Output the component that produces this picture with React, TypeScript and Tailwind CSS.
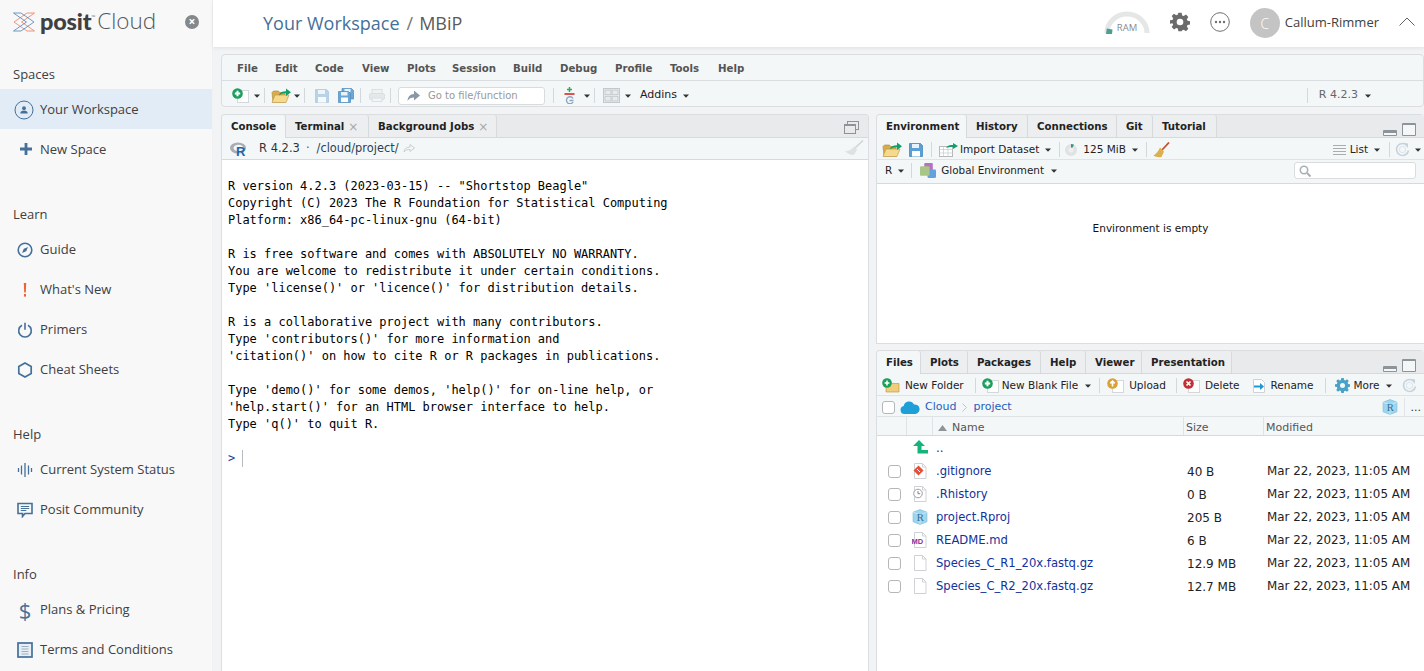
import React from "react";

const ui = "font-['DejaVu_Sans',sans-serif]";
const open = "font-['Open_Sans',sans-serif]";

function Caret({ className = "" }: { className?: string }) {
  return (
    <svg width="6" height="4" viewBox="0 0 6 4" className={"shrink-0 " + className}>
      <path d="M0 0.5h6L3 3.8z" fill="#333" />
    </svg>
  );
}
function Sep({ className = "" }: { className?: string }) {
  return <div className={"w-px h-[15px] bg-[#d4d8db] shrink-0 " + className} />;
}
function Folder({ w = 20 }: { w?: number }) {
  return (
    <svg width={w} height={w * 0.75} viewBox="0 0 20 15" className="shrink-0">
      <path d="M1 4.500L2.500 3h5l1 1.500H14V14H2z" fill="#d9ac4c" stroke="#a98432" strokeWidth=".6" />
      <path d="M4 7h14l-3 7.500H1z" fill="#f6d98a" stroke="#b8923e" strokeWidth=".6" />
      <path d="M8 7.500c.5-3 3-4.300 7-4.300V.5L20 4.300l-5 3.800V5.300c-3 0-5 .6-7 2.200z" fill="#12a06a" />
    </svg>
  );
}
function Floppy({ className = "" }: { className?: string }) {
  return (
    <svg width="14" height="14" viewBox="0 0 14 14" className={"shrink-0 " + className}>
      <path d="M.5.5h11l2 2v11H.5z" fill="#5a9fd6" stroke="#3f7fb5" strokeWidth=".7" />
      <rect x="3" y="1" width="7" height="4" fill="#e9f2fa" />
      <rect x="3" y="8" width="8" height="5.500" fill="#fff" />
    </svg>
  );
}
function SaveAll({ className = "" }: { className?: string }) {
  return (
    <svg width="16" height="15" viewBox="0 0 16 15" className={"shrink-0 " + className}>
      <path d="M4 .5h9.500l2 2V11H4z" fill="#5a9fd6" stroke="#3f7fb5" strokeWidth=".7" />
      <rect x="6.500" y="1" width="6" height="3" fill="#e9f2fa" />
      <path d="M.5 3.500h10l2 2v9H.5z" fill="#5a9fd6" stroke="#3f7fb5" strokeWidth=".7" />
      <rect x="3" y="4" width="6.500" height="3.500" fill="#e9f2fa" />
      <rect x="3" y="9.500" width="7" height="4.500" fill="#fff" />
    </svg>
  );
}
function PageBadge({ color, glyph }: { color: string; glyph: "plus" | "up" | "x" }) {
  return (
    <svg width="17" height="15" viewBox="0 0 17 15" className="shrink-0">
      <rect x="5.500" y="2.500" width="11" height="12" fill="#fff" stroke="#d5d8da" />
      <circle cx="5.500" cy="5.500" r="5.300" fill={color} />
      {glyph === "plus" && <path d="M5.500 2.800v5.400M2.800 5.500h5.400" stroke="#fff" strokeWidth="2" />}
      {glyph === "x" && <path d="M3.500 3.500l4 4M7.500 3.500l-4 4" stroke="#fff" strokeWidth="1.700" />}
      {glyph === "up" && <path d="M5.500 8.400V3.200M3.300 5.400l2.200-2.200 2.200 2.200" stroke="#fff" strokeWidth="1.600" fill="none" />}
    </svg>
  );
}
function Refresh() {
  return (
    <svg width="15" height="15" viewBox="0 0 15 15" className="shrink-0">
      <path d="M12.500 4A6 6 0 1 0 13.500 8.500" fill="none" stroke="#c5d3dc" strokeWidth="1.600" />
      <path d="M8.500 .8L13 1.500V6z" fill="#c5d3dc" />
      <circle cx="7.500" cy="7.500" r="3.200" fill="none" stroke="#dbe3e8" strokeWidth="1" />
    </svg>
  );
}
function RLogo() {
  return (
    <svg width="18" height="17" viewBox="0 0 18 17" className="shrink-0 mt-[3px]">
      <ellipse cx="8" cy="6" rx="8" ry="5.500" fill="#a9adb2" />
      <ellipse cx="8.500" cy="6" rx="5" ry="3.200" fill="#f4f7f8" />
      <text x="6" y="13.500" fontSize="13" fontWeight="700" fill="#1f64b0" fontFamily="Liberation Sans, sans-serif">R</text>
    </svg>
  );
}
function Cube({ size = 16 }: { size?: number }) {
  return (
    <svg width={size} height={size} viewBox="0 0 15 15" className="shrink-0">
      <path d="M7.500 .5L14 3v9l-6.500 2.500L1 12V3z" fill="#9fd6ee" stroke="#74bcdc" strokeWidth=".6" />
      <path d="M1 3l6.500 2.500L14 3M7.500 5.500v9" stroke="#d5eef8" strokeWidth=".7" fill="none" />
      <text x="4.500" y="11.500" fontSize="10" fill="#2f6f9a" fontFamily="Liberation Serif, serif">R</text>
    </svg>
  );
}
function FilePage({ children }: { children?: React.ReactNode }) {
  return (
    <svg width="16" height="16" viewBox="0 0 16 16" className="shrink-0">
      <path d="M2.500.5h8l3.500 3.500v11.500H2.500z" fill="#fff" stroke="#cfd2d4" />
      <path d="M10.500.5V4H14" fill="none" stroke="#cfd2d4" />
      {children}
    </svg>
  );
}
function Check() {
  return <div className="w-[13px] h-[13px] rounded-[3px] border border-[#b4b7b9] bg-white shrink-0" />;
}

function Tab({ w, label, active, close }: { w: string; label: string; active?: boolean; close?: boolean }) {
  return (
    <div
      className={
        "flex items-center pl-[9px] pt-[1px] rounded-t-[3px] border-r border-[#d6dadc] text-[10.2px] font-bold text-[#222] whitespace-nowrap shrink-0 " +
        w +
        (active ? " bg-[#f4f7f8] text-[#111] h-[23px] -mb-px z-10" : " bg-[#eceef0] h-[22px]")
      }
    >
      {label}
      {close && <span className="ml-[4px] text-[#a5a8aa] font-normal text-[12px] leading-none">×</span>}
    </div>
  );
}
function MinMax() {
  return (
    <div className="ml-auto mr-[8px] flex items-end gap-[5px] shrink-0">
      <div className="w-[14px] h-[6px] border border-[#8d9499] border-t-[3px] rounded-[1px] mb-[1px] bg-[#f4f7f8]" />
      <div className="w-[14px] h-[13px] border border-[#8d9499] border-t-2 rounded-[1px] mb-[1px] bg-[#f4f7f8]" />
    </div>
  );
}

type NI = { label: string; icon: React.ReactNode; active?: boolean };
const blue = "#447099";
const S = ({ children }: { children: React.ReactNode }) => (
  <svg width="16" height="16" viewBox="0 0 16 16" className="shrink-0">
    {children}
  </svg>
);
const sections: { title: string; items: NI[] }[] = [
  {
    title: "Spaces",
    items: [
      {
        label: "Your Workspace",
        active: true,
        icon: (
          <svg width="20" height="20" viewBox="0 0 20 20" className="shrink-0">
            <circle cx="10" cy="10" r="9" fill="none" stroke={blue} strokeWidth="1" />
            <circle cx="10" cy="8.200" r="1.900" fill={blue} />
            <path d="M6.300 13.500c0-2.200 1.600-3 3.700-3s3.700.8 3.700 3z" fill={blue} />
          </svg>
        ),
      },
      {
        label: "New Space",
        icon: (
          <svg width="14" height="14" viewBox="0 0 14 14" className="shrink-0 -mt-[2px] ml-[2px]">
            <path d="M7 1v12M1 7h12" stroke={blue} strokeWidth="2.800" />
          </svg>
        ),
      },
    ],
  },
  {
    title: "Learn",
    items: [
      {
        label: "Guide",
        icon: (
          <S>
            <circle cx="8" cy="8" r="6.800" fill="none" stroke={blue} strokeWidth="1.600" />
            <path d="M11 5L9.200 9.200 5 11l1.800-4.200z" fill={blue} />
          </S>
        ),
      },
      {
        label: "What's New",
        icon: (
          <S>
            <path d="M6.800 1h2.400l-.4 9.500H7.200z" fill="#ee6331" />
            <rect x="7" y="12" width="2" height="2.600" fill="#ee6331" />
          </S>
        ),
      },
      {
        label: "Primers",
        icon: (
          <S>
            <path d="M5 3.200a6.300 6.300 0 1 0 6 0" fill="none" stroke={blue} strokeWidth="1.600" />
            <path d="M8 .8v7" stroke={blue} strokeWidth="1.600" />
          </S>
        ),
      },
      {
        label: "Cheat Sheets",
        icon: (
          <S>
            <path d="M8 1l6.200 3.500v7L8 15l-6.200-3.500v-7z" fill="none" stroke={blue} strokeWidth="1.700" />
          </S>
        ),
      },
    ],
  },
  {
    title: "Help",
    items: [
      {
        label: "Current System Status",
        icon: (
          <S>
            <path d="M1.500 6v4M4.500 3.500v9M8 1v14M11.500 3.500v9M14.500 6v4" stroke={blue} strokeWidth="1.300" />
          </S>
        ),
      },
      {
        label: "Posit Community",
        icon: (
          <S>
            <path d="M1 1.500h14v10H8L5.500 14.500V11.500H1z" fill="none" stroke={blue} strokeWidth="1.600" />
            <path d="M3.800 4.500h8.400M3.800 6.500h8.400M3.800 8.500h5.500" stroke={blue} strokeWidth="1" />
          </S>
        ),
      },
    ],
  },
  {
    title: "Info",
    items: [
      {
        label: "Plans & Pricing",
        icon: <span className={"w-4 text-center text-[22px] leading-none text-[#447099] " + open}>$</span>,
      },
      {
        label: "Terms and Conditions",
        icon: (
          <S>
            <rect x="1" y="1" width="14" height="14" fill="#e8eef3" stroke={blue} strokeWidth="1.700" />
            <path d="M4.500 4.500h7M4.500 7h7M4.500 9.500h7M4.500 12h7" stroke="#8fa9bf" strokeWidth=".9" />
          </S>
        ),
      },
    ],
  },
];

function Sidebar() {
  return (
    <aside className={"w-[213px] shrink-0 h-full bg-[#f8f8f9] border-r border-[#f0f1f2] overflow-hidden " + open}>
      <div className="h-[59px] pl-[13px] pr-[13px] flex items-start pt-[8px]">
        <svg width="22" height="20" viewBox="0 0 22 20" className="mt-[4px] shrink-0">
          <path d="M21.500 1H14L1 10l13 9h7.500L8.500 10z" fill="none" stroke="#ee8a72" strokeWidth=".9" />
          <path d="M.5 1H8l13 9-13 9H.5l13-9z" fill="none" stroke="#5c8fbd" strokeWidth=".9" />
        </svg>
        <span className="ml-[5px] font-['Lato',sans-serif] font-black text-[23.500px] leading-[26px] text-[#404041] tracking-[-0.2px]">posit</span>
        <span className="text-[5px] leading-[18px] text-[#777]">™</span>
        <span className="ml-[2px] font-light text-[22.500px] leading-[26px] text-[#55585a]">Cloud</span>
        <div className="ml-auto mt-[7px] w-[14px] h-[14px] rounded-full bg-[#85888a] flex items-center justify-center text-white text-[12px] leading-none font-bold">×</div>
      </div>
      {sections.map((s) => (
        <div key={s.title} className="mb-[30px]">
          <div className="h-[30px] pt-[2px] flex items-center pl-[13px] text-[13px] text-[#404040]">{s.title}</div>
          {s.items.map((it) => (
            <div
              key={it.label}
              className={"h-[40px] pt-[2px] flex items-center text-[13px] text-[#404040] " + (it.active ? "bg-[#e1ecf6] pl-[14px]" : "pl-[17px]")}
            >
              {it.icon}
              <span className={it.active ? "ml-[6px]" : "ml-[7px]"}>{it.label}</span>
            </div>
          ))}
        </div>
      ))}
    </aside>
  );
}

function Header() {
  return (
    <header className={"h-[47px] shrink-0 bg-white pb-[1px] shadow-[0_1px_4px_rgba(0,0,0,0.08)] flex items-center pl-[50px] pr-[9px] z-10 relative " + open}>
      <span className="text-[18px] text-[#447099]">Your Workspace</span>
      <span className="text-[18px] text-[#767676] ml-[7px]">/</span>
      <span className="text-[18px] text-[#5a5a5a] ml-[6px]">MBiP</span>
      <div className="ml-auto flex items-center">
        <svg width="46" height="24" viewBox="0 0 46 24" className="shrink-0">
          <path d="M3 22A20 19 0 0 1 43 22" fill="none" stroke="#e5e7e6" strokeWidth="5" />
          <path d="M2 23L2.800 17.500 8.500 18.500 8 23z" fill="#4f9d92" />
          <text x="23" y="20" textAnchor="middle" fontSize="9.500" fill="#8a8a8a" fontFamily="Open Sans, sans-serif">RAM</text>
        </svg>
        <svg width="20" height="20" viewBox="0 0 24 24" className="ml-[20px] shrink-0 -mt-[3px]">
          <path
            fill="#6b6b6b"
            fillRule="evenodd"
            d="M10 1h4l.6 3.100 1.900.8 2.700-1.800 2.800 2.800-1.800 2.700.8 1.900 3 .5v4l-3 .6-.8 1.900 1.800 2.700-2.800 2.800-2.700-1.800-1.900.8L14 23h-4l-.6-3.100-1.900-.8-2.700 1.800-2.800-2.800 1.800-2.700-.8-1.900L0 14v-4l3-.5.8-1.900L2 4.900l2.800-2.800 2.700 1.800 1.900-.8zM12 8a4 4 0 1 0 0 8 4 4 0 0 0 0-8z"
          />
        </svg>
        <svg width="20" height="20" viewBox="0 0 20 20" className="ml-[20px] shrink-0 -mt-[3px]">
          <circle cx="10" cy="10" r="9.300" fill="none" stroke="#6f6f6f" strokeWidth="1" />
          <circle cx="6" cy="10" r="1.200" fill="#6f6f6f" />
          <circle cx="10" cy="10" r="1.200" fill="#6f6f6f" />
          <circle cx="14" cy="10" r="1.200" fill="#6f6f6f" />
        </svg>
        <div className="ml-[20px] w-[30px] h-[30px] rounded-full bg-[#c4c4c4] flex items-center justify-center text-white text-[14px] font-light">C</div>
        <span className="ml-[5px] text-[13px] text-[#404040]">Callum-Rimmer</span>
        <svg width="16" height="9" viewBox="0 0 16 9" className="ml-[20px] shrink-0 -mt-[4px]">
          <path d="M.5 8.500L8 1l7.500 7.500" fill="none" stroke="#606060" strokeWidth="1" />
        </svg>
      </div>
    </header>
  );
}

const menu: [string, string][] = [
  ["File", "w-[38px]"],
  ["Edit", "w-[40px]"],
  ["Code", "w-[47px]"],
  ["View", "w-[45px]"],
  ["Plots", "w-[45px]"],
  ["Session", "w-[61px]"],
  ["Build", "w-[47px]"],
  ["Debug", "w-[55px]"],
  ["Profile", "w-[55px]"],
  ["Tools", "w-[48px]"],
  ["Help", "w-[40px]"],
];

function TopBars() {
  return (
    <div className={"rounded-[4px] border border-[#dadee0] bg-[#f4f7f8] shrink-0 " + ui}>
      <div className="h-[26px] pt-[2px] flex items-center pl-[15px] border-b border-[#dadee0] text-[10.2px] font-bold text-[#545454]">
        {menu.map(([m, w]) => (
          <div key={m} className={w}>{m}</div>
        ))}
      </div>
      <div className="h-[25px] pt-[4px] flex items-center pl-[10px] text-[11px]">
        <PageBadge color="#1aa05b" glyph="plus" />
        <Caret className="ml-[5px]" />
        <Sep className="ml-[4px]" />
        <div className="ml-[6px]"><Folder /></div>
        <Caret className="ml-[3px]" />
        <Sep className="ml-[4px]" />
        <div className="ml-[10px] opacity-40"><Floppy /></div>
        <SaveAll className="ml-[9px] opacity-90" />
        <Sep className="ml-[6px]" />
        <svg width="16" height="13" viewBox="0 0 16 13" className="ml-[8px] shrink-0 opacity-70">
          <rect x="3" y=".5" width="10" height="5" fill="#eef0f1" stroke="#d2d5d7" />
          <rect x=".5" y="4.500" width="15" height="6" rx="1.500" fill="#e0e3e5" stroke="#d2d5d7" />
          <rect x="3" y="9" width="10" height="3.500" fill="#f3f4f5" stroke="#d2d5d7" />
        </svg>
        <Sep className="ml-[5px]" />
        <div className="ml-[7px] w-[147px] h-[18px] rounded-[3px] border border-[#d9dcde] bg-white flex items-center pl-[8px] text-[10px] text-[#999]">
          <svg width="13" height="12" viewBox="0 0 13 12" className="shrink-0">
            <path d="M7 .5l6 5-6 5V7.500C4 7.500 2 8.500.5 11c.3-4 2.500-6.800 6.500-7z" fill="#8a97a6" />
          </svg>
          <span className="ml-[8px]">Go to file/function</span>
        </div>
        <Sep className="ml-[8px]" />
        <svg width="13" height="17" viewBox="0 0 13 17" className="ml-[9px] shrink-0">
          <path d="M6.500 0v5M4 2.500h5" stroke="#2eaa5b" strokeWidth="1.500" />
          <rect x="1.500" y="6" width="10" height="2" fill="#d9534f" />
          <path d="M10 11.500A3.500 3.500 0 1 0 10 15M6.500 13.500h4" fill="none" stroke="#8aa6c0" strokeWidth="1.400" />
        </svg>
        <Caret className="ml-[8px]" />
        <Sep className="ml-[4px]" />
        <svg width="17" height="15" viewBox="0 0 17 15" className="ml-[8px] shrink-0">
          <rect x=".5" y=".5" width="16" height="14" fill="none" stroke="#c4c8cb" />
          <rect x="2" y="2" width="6" height="4.700" fill="#e8ebed" stroke="#c4c8cb" />
          <rect x="9" y="2" width="6" height="4.700" fill="#e8ebed" stroke="#c4c8cb" />
          <rect x="2" y="8.300" width="6" height="4.700" fill="#e8ebed" stroke="#c4c8cb" />
          <rect x="9" y="8.300" width="6" height="4.700" fill="#e8ebed" stroke="#c4c8cb" />
        </svg>
        <Caret className="ml-[5px]" />
        <span className="ml-[9px] text-[#222]">Addins</span>
        <Caret className="ml-[6px]" />
        <Sep className="ml-auto" />
        <span className="ml-[11px] text-[#666]">R 4.2.3</span>
        <Caret className="ml-[7px] mr-[52px]" />
      </div>
    </div>
  );
}

const consoleText = `R version 4.2.3 (2023-03-15) -- "Shortstop Beagle"
Copyright (C) 2023 The R Foundation for Statistical Computing
Platform: x86_64-pc-linux-gnu (64-bit)

R is free software and comes with ABSOLUTELY NO WARRANTY.
You are welcome to redistribute it under certain conditions.
Type 'license()' or 'licence()' for distribution details.

R is a collaborative project with many contributors.
Type 'contributors()' for more information and
'citation()' on how to cite R or R packages in publications.

Type 'demo()' for some demos, 'help()' for on-line help, or
'help.start()' for an HTML browser interface to help.
Type 'q()' to quit R.`;

function ConsolePane() {
  return (
    <section className={"w-[648px] shrink-0 flex flex-col rounded-t-[4px] border border-b-0 border-[#dadee0] bg-white overflow-hidden " + ui}>
      <div className="h-[23px] shrink-0 flex items-end bg-[#e8eaec] border-b border-[#d6dadc]">
        <Tab w="w-[64px]" label="Console" active />
        <Tab w="w-[83px]" label="Terminal" close />
        <Tab w="w-[128px]" label="Background Jobs" close />
        <svg width="15" height="13" viewBox="0 0 15 13" className="ml-auto mr-[9px] mb-[3px] shrink-0">
          <rect x="3.500" y=".5" width="11" height="8" fill="none" stroke="#8d9499" />
          <rect x=".5" y="3.500" width="11" height="9" fill="#e8eaec" stroke="#8d9499" />
          <rect x=".5" y="3.500" width="11" height="1.500" fill="#8d9499" />
        </svg>
      </div>
      <div className="h-[22px] shrink-0 flex items-center pl-[8px] pr-[4px] bg-[#f4f7f8] border-b border-[#d6dadc] text-[11.5px]">
        <RLogo />
        <span className="ml-[11px] text-[#333]">R 4.2.3</span>
        <span className="ml-[6px] text-[#555]">·</span>
        <span className="ml-[7px] text-[11.4px] text-[#2d3f55]">/cloud/project/</span>
        <svg width="12" height="9" viewBox="0 0 12 9" className="ml-[5px] shrink-0">
          <path d="M7 .5l4.500 3.500L7 7.500V5.500C4.500 5.500 2.500 6 1 8c.3-3 2.500-5 6-5z" fill="none" stroke="#c9ced2" />
        </svg>
        <svg width="20" height="17" viewBox="0 0 20 17" className="ml-auto shrink-0">
          <path d="M19 .5L11 8" stroke="#d0d3d5" strokeWidth="1.500" />
          <path d="M10 6.500c-2 3-5 4-9 5 3 2.500 6 3.500 8.500 3.500 2-2 3-4 3.500-6z" fill="#dfe2e4" />
        </svg>
      </div>
      <div className="flex-1 bg-white pl-[6px] pt-[18px] font-['DejaVu_Sans_Mono',monospace] text-[11.97px] leading-[17px] text-black whitespace-pre">
        {consoleText}
        {"\n\n"}
        <span className="text-[#1a3fa0]">&gt;</span>
        <span className="inline-block w-px h-[17px] bg-[#b9bcbe] ml-[7px] align-top" />
      </div>
    </section>
  );
}

function EnvPane() {
  return (
    <section className={"h-[230px] shrink-0 flex flex-col rounded-t-[4px] border border-[#dadee0] border-r-0 bg-white overflow-hidden " + ui}>
      <div className="h-[23px] shrink-0 flex items-end bg-[#e8eaec] border-b border-[#d6dadc]">
        <Tab w="w-[90px]" label="Environment" active />
        <Tab w="w-[61px]" label="History" />
        <Tab w="w-[89px]" label="Connections" />
        <Tab w="w-[36px]" label="Git" />
        <Tab w="w-[64px]" label="Tutorial" />
        <MinMax />
      </div>
      <div className="h-[22px] pt-[2px] shrink-0 flex items-center pl-[5px] bg-[#f4f7f8] border-b border-[#dfe3e5] text-[10.5px] text-[#222]">
        <Folder />
        <Floppy className="ml-[7px]" />
        <Sep className="ml-[8px]" />
        <svg width="20" height="14" viewBox="0 0 20 14" className="ml-[7px] shrink-0">
          <rect x=".5" y="3.500" width="13" height="10" fill="#fff" stroke="#b5b9bc" />
          <path d="M.5 6.500h13M.5 10h13M4.500 3.500v10M9 3.500v10" stroke="#c5c8cb" strokeWidth=".7" />
          <path d="M7 5c1-2.500 4-3 7-3V0l5 3-5 3V4C11 4 9 4 7 5z" fill="#12a06a" />
        </svg>
        <span className="ml-[1px]">Import Dataset</span>
        <Caret className="ml-[6px]" />
        <Sep className="ml-[8px]" />
        <svg width="12" height="12" viewBox="0 0 12 12" className="ml-[5px] shrink-0">
          <circle cx="6" cy="6" r="6" fill="#e0e2e3" />
          <path d="M6 6V0a6 6 0 0 1 3 .8z" fill="#3d8f7e" />
          <circle cx="6" cy="6" r="2.500" fill="#eeefef" />
        </svg>
        <span className="ml-[6px]">125 MiB</span>
        <Caret className="ml-[6px]" />
        <Sep className="ml-[8px]" />
        <svg width="17" height="16" viewBox="0 0 17 16" className="ml-[6px] shrink-0">
          <path d="M16 .5L9 8" stroke="#c0532f" strokeWidth="1.800" />
          <path d="M7 5.500l4 4-2.500 5.500C5 15.500 2.500 15 .5 13.500 3 12 5.500 9 7 5.500z" fill="#dcb04e" />
        </svg>
        <svg width="13" height="10" viewBox="0 0 13 10" className="ml-auto shrink-0">
          <path d="M0 .5h13M0 3.500h13M0 6.500h13M0 9.500h13" stroke="#a8adb0" />
        </svg>
        <span className="ml-[4px]">List</span>
        <Caret className="ml-[6px]" />
        <Sep className="ml-[9px]" />
        <div className="ml-[5px]"><Refresh /></div>
        <Caret className="ml-[5px] mr-[3px]" />
      </div>
      <div className="h-[24px] pb-[2px] shrink-0 flex items-center pl-[8px] bg-[#f4f7f8] border-b border-[#d6dadc] text-[10.4px] text-[#222]">
        <span>R</span>
        <Caret className="ml-[6px]" />
        <Sep className="ml-[7px]" />
        <svg width="16" height="16" viewBox="0 0 15 15" className="ml-[8px] shrink-0">
          <rect x="4" y="0" width="8" height="8" rx="1" fill="#b86fc4" />
          <rect x="7" y="6" width="8" height="8" rx="1" fill="#62a0e0" />
          <rect x="0" y="3" width="9" height="9" rx="1" fill="#a8c685" />
        </svg>
        <span className="ml-[5px]">Global Environment</span>
        <Caret className="ml-[7px]" />
        <div className="ml-auto mr-[8px] w-[122px] h-[17px] rounded-[3px] border border-[#dadcde] bg-white flex items-center pl-[4px]">
          <svg width="12" height="12" viewBox="0 0 12 12" className="shrink-0">
            <circle cx="5" cy="5" r="3.700" fill="none" stroke="#aab0b4" strokeWidth="1.600" />
            <path d="M8 8l3.500 3.500" stroke="#aab0b4" strokeWidth="2" />
          </svg>
        </div>
      </div>
      <div className="flex-1 bg-white flex justify-center pt-[37px] text-[10.5px] text-[#111]">Environment is empty</div>
    </section>
  );
}

const files: { name: string; size: string; icon: React.ReactNode }[] = [
  {
    name: ".gitignore",
    size: "40 B",
    icon: (
      <FilePage>
        <path d="M6.500 2.500l5 5-5 5-5-5z" fill="#e94f37" />
        <path d="M5 6l3 3" stroke="#fff" />
      </FilePage>
    ),
  },
  {
    name: ".Rhistory",
    size: "0 B",
    icon: (
      <FilePage>
        <circle cx="6" cy="7.500" r="4.300" fill="#fff" stroke="#9a9da0" />
        <path d="M6 5v2.700h2.200" fill="none" stroke="#666" strokeWidth=".8" />
      </FilePage>
    ),
  },
  { name: "project.Rproj", size: "205 B", icon: <Cube size={16} /> },
  {
    name: "README.md",
    size: "6 B",
    icon: (
      <FilePage>
        <text x="-0.500" y="12" fontSize="7.500" fontWeight="700" fill="#8c2f9a" fontFamily="Liberation Sans, sans-serif">MD</text>
      </FilePage>
    ),
  },
  { name: "Species_C_R1_20x.fastq.gz", size: "12.9 MB", icon: <FilePage /> },
  { name: "Species_C_R2_20x.fastq.gz", size: "12.7 MB", icon: <FilePage /> },
];

function FilesPane() {
  return (
    <section className={"flex-1 min-h-0 mt-[6px] flex flex-col rounded-t-[4px] border border-[#dadee0] border-r-0 border-b-0 bg-white overflow-hidden " + ui}>
      <div className="h-[23px] shrink-0 flex items-end bg-[#e8eaec] border-b border-[#d6dadc]">
        <Tab w="w-[44px]" label="Files" active />
        <Tab w="w-[47px]" label="Plots" />
        <Tab w="w-[73px]" label="Packages" />
        <Tab w="w-[45px]" label="Help" />
        <Tab w="w-[56px]" label="Viewer" />
        <Tab w="w-[90px]" label="Presentation" />
        <MinMax />
      </div>
      <div className="h-[22px] pt-[2px] shrink-0 flex items-center pl-[5px] bg-[#f4f7f8] border-b border-[#dfe3e5] text-[10.5px] text-[#222]">
        <svg width="18" height="15" viewBox="0 0 18 15" className="shrink-0">
          <path d="M4 4h5l1 1.500h7V14H4z" fill="#efcd7a" stroke="#b8923e" strokeWidth=".6" />
          <circle cx="5" cy="5" r="4.800" fill="#1aa05b" />
          <path d="M5 2.600v4.800M2.600 5h4.800" stroke="#fff" strokeWidth="1.500" />
        </svg>
        <span className="ml-[5px]">New Folder</span>
        <Sep className="ml-[11px]" />
        <div className="ml-[6px]"><PageBadge color="#1aa05b" glyph="plus" /></div>
        <span className="ml-[3px]">New Blank File</span>
        <Caret className="ml-[7px]" />
        <Sep className="ml-[8px]" />
        <div className="ml-[7px]"><PageBadge color="#d9a334" glyph="up" /></div>
        <span className="ml-[5px]">Upload</span>
        <Sep className="ml-[10px]" />
        <div className="ml-[6px]"><PageBadge color="#c22f35" glyph="x" /></div>
        <span className="ml-[5px]">Delete</span>
        <svg width="15" height="14" viewBox="0 0 15 14" className="ml-[12px] shrink-0">
          <path d="M2.500.5h8l3 3v10h-11z" fill="#fff" stroke="#cfd2d4" />
          <path d="M0 7.500h6V5l4 3.500-4 3.500V9.500H0z" fill="#1b9ad6" transform="translate(3 -1)" />
        </svg>
        <span className="ml-[4px]">Rename</span>
        <Sep className="ml-[11px]" />
        <svg width="15" height="15" viewBox="0 0 24 24" className="ml-[9px] shrink-0">
          <path
            fill="#4aa3c7"
            fillRule="evenodd"
            d="M10 0h4l.6 3.100 1.900.8 2.700-1.800 2.800 2.800-1.800 2.700.8 1.900 3 .5v4l-3 .6-.8 1.900 1.800 2.700-2.800 2.800-2.700-1.800-1.900.8L14 24h-4l-.6-3.100-1.900-.8-2.700 1.800-2.800-2.800 1.800-2.700-.8-1.900L0 14v-4l3-.5.8-1.900L2 4.900l2.800-2.800 2.700 1.800 1.900-.8zM12 8a4 4 0 1 0 0 8 4 4 0 0 0 0-8z"
          />
        </svg>
        <span className="ml-[4px]">More</span>
        <Caret className="ml-[6px]" />
        <div className="ml-[10px]"><Refresh /></div>
      </div>
      <div className="h-[21px] pt-[2px] shrink-0 flex items-center pl-[5px] bg-[#f4f7f8] border-b border-[#dfe3e5] text-[11px]">
        <Check />
        <svg width="20" height="13" viewBox="0 0 20 13" className="ml-[5px] shrink-0">
          <path d="M4.500 13a4 4 0 0 1-.8-7.900A5.500 5.500 0 0 1 14 3.500 4.800 4.800 0 0 1 15.500 13z" fill="#1f9fd8" />
        </svg>
        <span className="ml-[5px] text-[#1f5fbf]">Cloud</span>
        <svg width="5" height="9" viewBox="0 0 5 9" className="ml-[6px] shrink-0">
          <path d="M.5.5l4 4-4 4" fill="none" stroke="#c0c4c7" />
        </svg>
        <span className="ml-[6px] text-[#1f5fbf]">project</span>
        <div className="ml-auto"><Cube /></div>
        <div className="ml-[6px] w-px h-[18px] bg-[#e2e5e7]" />
        <span className="ml-[6px] mr-[3px] text-[#333] leading-none">...</span>
      </div>
      <div className="h-[19px] shrink-0 flex items-center bg-[#f4f7f8] border-b border-[#d6dadc] text-[11px] text-[#555]">
        <div className="w-[30px] h-full border-r border-[#dfe3e5]" />
        <div className="w-[26px] h-full border-r border-[#dfe3e5]" />
        <div className="w-[251px] h-full pt-[4px] border-r border-[#dfe3e5] flex items-center pl-[5px]">
          <svg width="9" height="6" viewBox="0 0 9 6" className="shrink-0">
            <path d="M4.500 0L9 6H0z" fill="#8f9498" />
          </svg>
          <span className="ml-[5px]">Name</span>
        </div>
        <div className="w-[80px] h-full pt-[4px] border-r border-[#dfe3e5] flex items-center pl-[2px]">Size</div>
        <div className="flex-1 h-full pt-[4px] flex items-center pl-[2px]">Modified</div>
      </div>
      <div className="flex-1 bg-white text-[12px] pt-[1px]">
        <div className="h-[22px] mb-[1px] flex items-center">
          <div className="w-[36px]" />
          <svg width="15" height="14" viewBox="0 0 15 14" className="shrink-0 -mt-[3px]">
            <path d="M6 0l6 6H8.500v4H15v3.500H4.500V6H0z" fill="#14b47a" />
          </svg>
          <span className="ml-[8px] text-[#11329c]">..</span>
        </div>
        {files.map((f) => (
          <div key={f.name} className="h-[23px] flex items-center">
            <div className="w-[11px]" />
            <Check />
            <div className="w-[11px]" />
            <div className="w-[16px] flex justify-center -mt-[2px]">{f.icon}</div>
            <span className="ml-[8px] w-[251px] text-[11.6px] text-[#11329c] whitespace-nowrap">{f.name}</span>
            <span className="w-[80px] text-[#222]">{f.size}</span>
            <span className="text-[11.9px] text-[#222] whitespace-nowrap">Mar 22, 2023, 11:05 AM</span>
          </div>
        ))}
      </div>
    </section>
  );
}

export default function App() {
  return (
    <div className="w-[1424px] h-[671px] flex overflow-hidden bg-[#f2f3f4]">
      <Sidebar />
      <main className="flex-1 min-w-0 flex flex-col h-full">
        <Header />
        <div className="flex-1 min-h-0 flex flex-col pl-[8px] pt-[7px]">
          <TopBars />
          <div className="flex-1 min-h-0 flex mt-[7px]">
            <ConsolePane />
            <div className="flex-1 min-w-0 flex flex-col ml-[7px]">
              <EnvPane />
              <FilesPane />
            </div>
          </div>
        </div>
      </main>
    </div>
  );
}
